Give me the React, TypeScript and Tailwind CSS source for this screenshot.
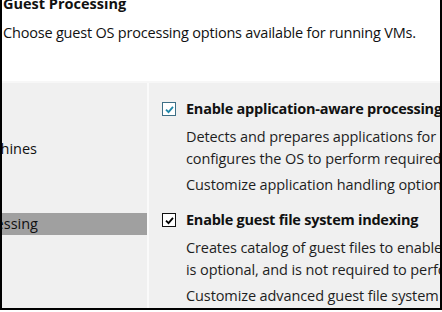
import React from 'react';

const font = { fontFamily: '"Open Sans", "Noto Sans", sans-serif' };

const CheckBox: React.FC<{ accent?: boolean }> = ({ accent }) => (
    <span className={`flex h-[14px] w-[14px] shrink-0 items-center justify-center border bg-white ${accent ? 'border-[#3d6f86]' : 'border-[#111]'}`}>
        <svg viewBox="0 0 12 12" className="h-[11px] w-[11px]">
            <path d="M2.2 6.2 L4.9 8.8 L9.8 3.2" fill="none" stroke={accent ? '#1f86a8' : '#000'} strokeWidth="2" />
        </svg>
    </span>
);

const Option: React.FC<{ accent?: boolean; title: string; lines: string[]; link: string }> = ({ accent, title, lines, link }) => (
    <div className="flex shrink-0 flex-col">
        <div className="flex h-[22px] items-center gap-[10px]">
            <CheckBox accent={accent} />
            <span className="whitespace-nowrap text-[14.5px] font-bold tracking-[-0.25px] text-[#111]">{title}</span>
        </div>
        <div className="ml-[24px] mt-[6px] flex flex-col whitespace-nowrap text-[14.5px] leading-[22px] tracking-[-0.1px] text-[#1e1e1e]">
            {lines.map(l => <span key={l}>{l}</span>)}
            <span className="mt-[4px]">{link}</span>
        </div>
    </div>
);

export default function App() {
    return (
        <div className="h-[312px] w-[442px] overflow-hidden bg-white" style={font}>
            <div className="flex h-[310px] w-[442px] flex-col overflow-hidden border-x-2 border-b-2 border-black">
                {/* Header */}
                <div className="h-[81px] shrink-0 bg-white pl-[1px] text-[#111]">
                    <div className="-mt-[6px] whitespace-nowrap text-[14.5px] font-bold leading-[20px]">Guest Processing</div>
                    <div className="mt-[9px] whitespace-nowrap text-[14.5px] leading-[20px] tracking-[-0.2px]">Choose guest OS processing options available for running VMs.</div>
                </div>
                <div className="h-[2px] shrink-0 bg-[#f7f7f7]" />
                {/* Body */}
                <div className="flex min-h-0 flex-1 bg-[#f0f0f0]">
                    <div className="flex w-[145px] shrink-0 flex-col overflow-hidden pt-[55px]">
                        <div className="flex h-[22px] w-[35px] justify-end whitespace-nowrap text-[14.5px] leading-[22px] text-[#111]">
                            <span>Virtual Machines</span>
                        </div>
                        <div className="mt-[53px] h-[22px] bg-[#a0a0a0]">
                            <div className="flex h-[22px] w-[36px] justify-end whitespace-nowrap text-[14.5px] leading-[22px] text-[#111]">
                                <span>Guest Processing</span>
                            </div>
                        </div>
                    </div>
                    <div className="w-[2px] shrink-0 bg-[#fafafa]" />
                    <div className="flex min-w-0 flex-1 flex-col gap-[13px] overflow-hidden pl-[13px] pt-[15px]">
                        <Option
                            accent
                            title="Enable application-aware processing"
                            lines={['Detects and prepares applications for consistent backup, performs', 'configures the OS to perform required restore steps.']}
                            link="Customize application handling options for individual VMs"
                        />
                        <Option
                            title="Enable guest file system indexing"
                            lines={['Creates catalog of guest files to enable browsing, searching', 'is optional, and is not required to perform instant file level']}
                            link="Customize advanced guest file system indexing options"
                        />
                    </div>
                </div>
            </div>
        </div>
    );
}
